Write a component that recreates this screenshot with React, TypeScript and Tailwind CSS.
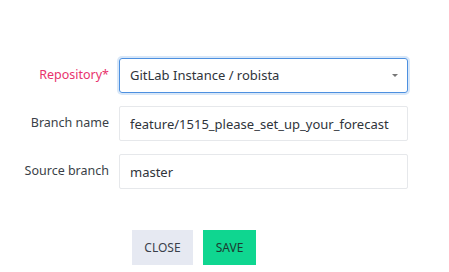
import { useState } from "react";

const font = { fontFamily: '"Noto Sans", "Open Sans", sans-serif' };

function Row({
  label,
  required,
  children,
}: {
  label: string;
  required?: boolean;
  children: React.ReactNode;
}) {
  return (
    <div className="flex items-center">
      <label
        className={`w-[109px] shrink-0 text-right text-[12.5px] ${
          required ? "text-[#e8336d]" : "text-[#3a3f47]"
        }`}
      >
        {label}
        {required && "*"}
      </label>
      <div className="ml-[10px] w-[289px]">{children}</div>
    </div>
  );
}

export default function App() {
  const [branch, setBranch] = useState("feature/1515_please_set_up_your_forecast");
  const [source, setSource] = useState("master");

  return (
    <div className="h-[272px] w-[449px] bg-white" style={font}>
      <div className="flex flex-col gap-[13px] pt-[58px]">
        <Row label="Repository" required>
          <div className="flex h-[35px] items-center justify-between rounded-[3px] border border-[#4d90e0] pl-[10px] pr-[9px] text-[13px] text-[#2f343b] shadow-[0_0_0_2px_rgba(77,144,224,0.22)]">
            <span>GitLab Instance / robista</span>
            <span className="h-0 w-0 border-x-[3px] border-t-[3.5px] border-x-transparent border-t-[#777]" />
          </div>
        </Row>
        <Row label="Branch name">
          <input
            value={branch}
            onChange={(e) => setBranch(e.target.value)}
            className="h-[35px] w-full rounded-[2px] border border-[#e6e8eb] px-[10px] text-[13px] text-[#2f343b] outline-none"
          />
        </Row>
        <Row label="Source branch">
          <input
            value={source}
            onChange={(e) => setSource(e.target.value)}
            className="h-[35px] w-full rounded-[2px] border border-[#e6e8eb] px-[10px] text-[13px] text-[#2f343b] outline-none"
          />
        </Row>
      </div>
      <div className="mt-[41px] flex gap-[10px] pl-[132px]">
        <button className="h-[35px] w-[61px] bg-[#e6e9f2] pt-[1px] text-[12px] text-[#3a3f4a]">
          CLOSE
        </button>
        <button className="h-[35px] w-[53px] bg-[#0fd690] pt-[1px] text-[12px] text-[#1d3b30]">
          SAVE
        </button>
      </div>
    </div>
  );
}
